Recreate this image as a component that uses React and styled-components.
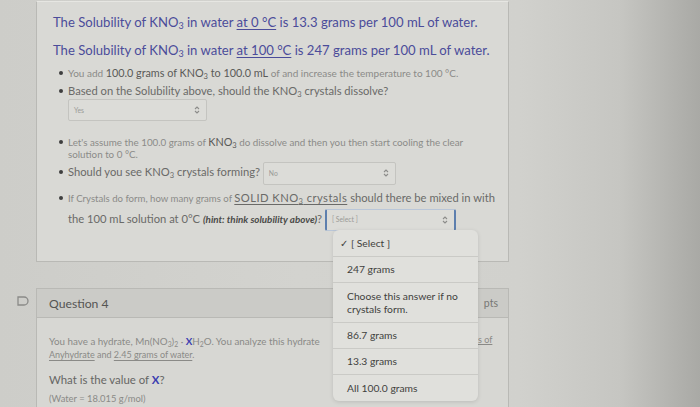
import React from "react";
import styled, { createGlobalStyle } from "styled-components";

const Global = createGlobalStyle`
  html, body { margin: 0; padding: 0; }
  body {
    width: 700px; height: 407px; overflow: hidden;
    font-family: Lato, "Open Sans", Arial, sans-serif;
    background: linear-gradient(90deg, #cdcdc9 0px, #d3d3cf 300px, #d1d1cd 520px, #c6c6c2 620px, #a9a9a5 700px);
  }
`;

const Page = styled.div`
  position: relative;
  width: 700px;
  height: 407px;
  overflow: hidden;
  padding-left: 36px;
  box-sizing: border-box;
`;

const Column = styled.div`
  width: 473px;
  display: flex;
  flex-direction: column;
`;

const Card = styled.div`
  border: 1px solid #b9b9b5;
  border-top-color: #e6e6e2;
  background: #d9d9d5;
  margin-top: 1px;
  height: 261px;
  box-sizing: border-box;
  padding: 6px 6px 0 16px;
`;

const Heading = styled.div`
  font-size: 13.1px;
  color: #4b4c9a;
  line-height: 28px;
  white-space: nowrap;
  sub { font-size: 9px; vertical-align: -2px; line-height: 0; }
  u { text-underline-offset: 2px; }
`;

const List = styled.ul`
  margin: ${(p) => p.$mt || 0}px 0 0 0;
  padding: 0 0 0 15px;
  list-style: none;
`;

const Item = styled.li`
  position: relative;
  line-height: ${(p) => p.$lh || 17}px;
  margin-top: ${(p) => p.$mt || 0}px;
  color: #6a6a68;
  font-size: 11.2px;
  white-space: nowrap;
  &::before {
    content: "";
    position: absolute;
    left: -9px;
    top: ${(p) => (p.$lh || 17) / 2 - 2}px;
    width: 4px; height: 4px; border-radius: 50%;
    background: #3e3e3e;
  }
  sub { font-size: 7.5px; vertical-align: -2px; line-height: 0; }
`;

const Small = styled.span`
  font-size: ${(p) => p.$fs || 10}px;
  color: #8b8b88;
`;

const Mid = styled.span`
  font-size: 10.8px;
  color: #5a5a58;
`;

const Hint = styled.span`
  font-size: 9.8px;
  font-weight: 700;
  font-style: italic;
  color: #4a4a48;
`;

const Under = styled.span`
  text-decoration: underline;
  text-underline-offset: 2px;
  letter-spacing: ${(p) => p.$ls || 0}px;
`;

const SelectBox = styled.span`
  display: ${(p) => (p.$block ? "flex" : "inline-flex")};
  align-items: center;
  justify-content: space-between;
  box-sizing: border-box;
  width: ${(p) => p.$w}px;
  height: ${(p) => p.$h || 22}px;
  margin: ${(p) => p.$m || "0"};
  padding: 0 6px 0 5px;
  border: 1px solid ${(p) => (p.$focus ? "#b9c6d8" : "#c4c4c0")};
  border-left: ${(p) => (p.$focus ? "2px solid #5d7fae" : "1px solid #c4c4c0")};
  border-right: ${(p) => (p.$focus ? "2px solid #5d7fae" : "1px solid #c4c4c0")};
  border-radius: 2px;
  background: #dcdcd8;
  font-size: 6.8px;
  color: #9a9a97;
  vertical-align: middle;
  line-height: 1;
`;

const Chevron = () => (
  <svg width="6" height="8" viewBox="0 0 6 8">
    <path d="M1 3 L3 1 L5 3 M1 5 L3 7 L5 5" fill="none" stroke="#8c8c8a" strokeWidth="1.1" />
  </svg>
);

const Q4Card = styled.div`
  margin-top: 26px;
  border: 1px solid #b9b9b5;
  background: #d7d7d3;
  height: 140px;
  box-sizing: border-box;
`;

const Q4Header = styled.div`
  height: 28px;
  display: flex;
  align-items: center;
  justify-content: space-between;
  padding: 0 10px 0 12px;
  background: #cbcbc7;
  border-bottom: 1px solid #b9b9b5;
  font-size: 12.2px;
  color: #555553;
`;

const Q4Body = styled.div`
  padding: 16px 12px 0 12px;
  color: #8a8a87;
  sub { font-size: 6.8px; vertical-align: -2px; line-height: 0; }
`;

const BodyLine = styled.div`
  line-height: 14px;
  white-space: nowrap;
  margin-top: ${(p) => p.$mt || 0}px;
  font-size: ${(p) => p.$fs || 9}px;
  color: ${(p) => p.$c || "#8a8a87"};
`;

const BlueX = styled.b`
  color: #3b3db0;
`;

const FlagIcon = styled.svg`
  position: absolute;
  left: 17px;
  top: 296px;
`;

const Menu = styled.div`
  position: absolute;
  left: 333px;
  top: 230px;
  width: 145px;
  background: #e0e0dc;
  border-radius: 6px;
  box-shadow: 0 1px 4px rgba(0,0,0,0.12);
  display: flex;
  flex-direction: column;
  overflow: hidden;
`;

const Option = styled.div`
  min-height: ${(p) => p.$h || 26}px;
  display: flex;
  align-items: center;
  padding: 0 8px 0 ${(p) => (p.$checked ? 7 : 14)}px;
  font-size: 10.3px;
  line-height: 13px;
  color: #3f3f3d;
  border-top: ${(p) => (p.$first ? "none" : "1px solid #cacac6")};
  box-sizing: border-box;
  gap: 3px;
`;

const Pts = styled.span`
  font-size: 10.5px;
  color: #777774;
`;

const SideNote = styled.span`
  position: absolute;
  left: 478px;
  top: 334px;
  font-size: 9px;
  color: #8a8a87;
  text-decoration: underline;
`;

export default function App() {
  return (
    <>
      <Global />
      <Page>
        <Column>
          <Card>
            <Heading>
              The Solubility of KNO<sub>3</sub> in water <u>at 0 °C</u> is 13.3 grams per 100 mL of water.
            </Heading>
            <Heading>
              The Solubility of KNO<sub>3</sub> in water <u>at 100 °C</u> is 247 grams per 100 mL of water.
            </Heading>
            <List>
              <Item>
                <Small>You add </Small>
                <Mid>100.0 grams of KNO<sub>3</sub> to 100.0 mL</Mid>
                <Small> of and increase the temperature to 100 °C.</Small>
              </Item>
              <Item>
                Based on the Solubility above, should the KNO<sub>3</sub> crystals dissolve?
              </Item>
            </List>
            <SelectBox $w={139} $block $m="0 0 0 15px">
              Yes <Chevron />
            </SelectBox>
            <List $mt={15}>
              <Item $lh={12}>
                <Small $fs={9.8}>
                  Let's assume the 100.0 grams of <Mid>KNO<sub>3</sub></Mid> do dissolve and then you then start cooling the clear
                  <br />
                  solution to 0 °C.
                </Small>
              </Item>
              <Item $lh={24} $mt={0}>
                Should you see KNO<sub>3</sub> crystals forming?{" "}
                <SelectBox $w={133} $h={23}>
                  No <Chevron />
                </SelectBox>
              </Item>
              <Item $lh={20} $mt={3}>
                <Small $fs={9.6}>If Crystals do form, how many grams of </Small>
                <Under $ls={0.45}>SOLID KNO<sub>3</sub> crystals</Under> should there be mixed in with
                <br />
                the 100 mL solution at 0°C <Hint>(hint: think solubility above)</Hint>?{" "}
                <SelectBox $w={131} $focus>
                  [ Select ] <Chevron />
                </SelectBox>
              </Item>
            </List>
          </Card>
          <Q4Card>
            <Q4Header>
              <span>Question 4</span>
              <Pts>pts</Pts>
            </Q4Header>
            <Q4Body>
              <BodyLine $fs={9.8}>
                You have a hydrate, Mn(NO<sub>3</sub>)<sub>2</sub> · <BlueX>X</BlueX>H<sub>2</sub>O. You analyze this hydrate
              </BodyLine>
              <BodyLine>
                <Under>Anyhydrate</Under> and <Under>2.45 grams of water</Under>.
              </BodyLine>
              <BodyLine $mt={11} $fs={11.4} $c="#666664">
                What is the value of <BlueX>X</BlueX>?
              </BodyLine>
              <BodyLine $mt={5} $fs={9.4}>(Water = 18.015 g/mol)</BodyLine>
            </Q4Body>
          </Q4Card>
        </Column>
        <FlagIcon width="12" height="10" viewBox="0 0 12 10">
          <path d="M1 1 H7 A4 4 0 0 1 7 9 H1 Z" fill="none" stroke="#8a8a88" strokeWidth="1.3" />
        </FlagIcon>
        <SideNote>s of</SideNote>
        <Menu>
          <Option $first $checked>
            <span>✓</span> [ Select ]
          </Option>
          <Option>247 grams</Option>
          <Option $h={40}>Choose this answer if no crystals form.</Option>
          <Option>86.7 grams</Option>
          <Option>13.3 grams</Option>
          <Option $h={27}>All 100.0 grams</Option>
        </Menu>
      </Page>
    </>
  );
}
